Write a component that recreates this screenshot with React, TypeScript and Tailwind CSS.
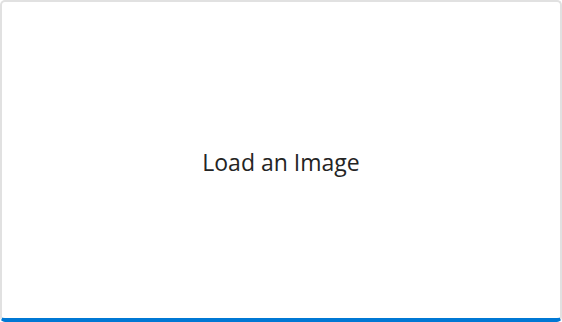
export default function App() {
  return (
    <div className="h-[322px] w-[562px] bg-white">
      <div className="flex h-full w-full items-center justify-center rounded-[5px] border-2 border-b-[4px] border-[#e1e1e1] border-b-[#0078d4] bg-white pt-[4px]">
        <span className="text-[23px] text-[#242424]" style={{ fontFamily: '"Open Sans", "Noto Sans", sans-serif' }}>
          Load an Image
        </span>
      </div>
    </div>
  );
}
